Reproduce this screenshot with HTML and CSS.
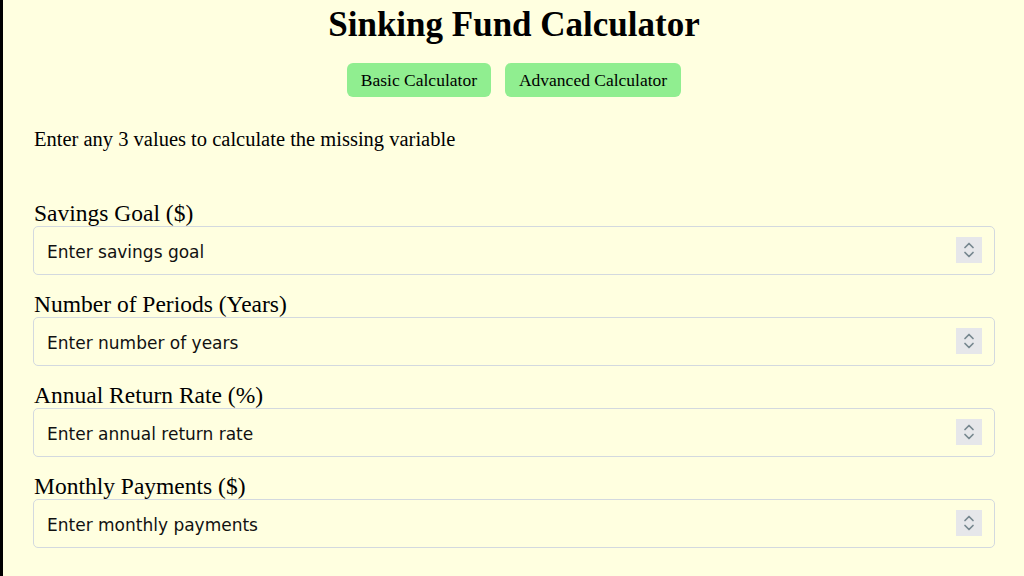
FILE: index.html
```html
<!DOCTYPE html>
<html lang="en">
<head>
    <meta charset="UTF-8">
    <meta name="viewport" content="width=device-width, initial-scale=1.0">
    <title>Sinking Fund Calculator</title>
    <link rel="stylesheet" href="styles.css">
</head>
<body>
    <div class="container">
        <h1>Sinking Fund Calculator</h1>

        <div class="tabs">
            <button class="tab">Basic Calculator</button>
            <button class="tab">Advanced Calculator</button>
        </div>

        <p class="intro">Enter any 3 values to calculate the missing variable</p>

        <div class="form">
            <div class="field">
                <label for="goal">Savings Goal ($)</label>
                <div class="input-wrap">
                    <input type="number" id="goal" placeholder="Enter savings goal">
                    <span class="spin"><svg viewBox="0 0 26 26" width="26" height="26"><path d="M9 10.5 L13 6.5 L17 10.5 M9 15.5 L13 19.5 L17 15.5" fill="none" stroke="#76878f" stroke-width="1.7" stroke-linecap="round" stroke-linejoin="round"/></svg></span>
                </div>
            </div>
            <div class="field">
                <label for="years">Number of Periods (Years)</label>
                <div class="input-wrap">
                    <input type="number" id="years" placeholder="Enter number of years">
                    <span class="spin"><svg viewBox="0 0 26 26" width="26" height="26"><path d="M9 10.5 L13 6.5 L17 10.5 M9 15.5 L13 19.5 L17 15.5" fill="none" stroke="#76878f" stroke-width="1.7" stroke-linecap="round" stroke-linejoin="round"/></svg></span>
                </div>
            </div>
            <div class="field">
                <label for="rate">Annual Return Rate (%)</label>
                <div class="input-wrap">
                    <input type="number" id="rate" placeholder="Enter annual return rate">
                    <span class="spin"><svg viewBox="0 0 26 26" width="26" height="26"><path d="M9 10.5 L13 6.5 L17 10.5 M9 15.5 L13 19.5 L17 15.5" fill="none" stroke="#76878f" stroke-width="1.7" stroke-linecap="round" stroke-linejoin="round"/></svg></span>
                </div>
            </div>
            <div class="field">
                <label for="payment">Monthly Payments ($)</label>
                <div class="input-wrap">
                    <input type="number" id="payment" placeholder="Enter monthly payments">
                    <span class="spin"><svg viewBox="0 0 26 26" width="26" height="26"><path d="M9 10.5 L13 6.5 L17 10.5 M9 15.5 L13 19.5 L17 15.5" fill="none" stroke="#76878f" stroke-width="1.7" stroke-linecap="round" stroke-linejoin="round"/></svg></span>
                </div>
            </div>
        </div>
    </div>
</body>
</html>
```

FILE: styles.css
```css
* {
    box-sizing: border-box;
}

body {
    margin: 0;
    background: #ffffe0;
    font-family: "Liberation Serif", "Times New Roman", serif;
    color: #000;
}

.container {
    border-left: 3px solid #000;
    min-height: 100vh;
    padding: 0 29px 0 30px;
}

h1 {
    margin: 0;
    padding-top: 6px;
    text-align: center;
    font-size: 35px;
    line-height: 38px;
}

.tabs {
    display: flex;
    justify-content: center;
    gap: 14px;
    margin-top: 19px;
}

.tab {
    height: 34px;
    padding: 0 14px;
    background: #90ee90;
    border: none;
    border-radius: 6px;
    font-family: "Liberation Serif", serif;
    font-size: 17.5px;
    color: #000;
    cursor: pointer;
}

.intro {
    margin: 30px 0 0 1px;
    font-size: 20.5px;
    line-height: 24px;
}

.form {
    margin-top: 49px;
    display: flex;
    flex-direction: column;
    gap: 16px;
}

.field label {
    display: block;
    margin-left: 1px;
    font-size: 23.5px;
    line-height: 26px;
}

.input-wrap {
    position: relative;
}

.input-wrap input {
    display: block;
    width: 100%;
    height: 49px;
    padding: 3px 13px 0;
    background: transparent;
    border: 1px solid #d3d9df;
    border-radius: 5px;
    font-family: "DejaVu Sans", sans-serif;
    font-size: 17px;
    outline: none;
    -moz-appearance: textfield;
}

.input-wrap input::placeholder {
    color: #111;
}

.input-wrap input::-webkit-inner-spin-button,
.input-wrap input::-webkit-outer-spin-button {
    -webkit-appearance: none;
    margin: 0;
}

.spin {
    position: absolute;
    right: 13px;
    top: 11px;
    width: 26px;
    height: 26px;
    background: #e6e7ea;
    display: flex;
}
```
